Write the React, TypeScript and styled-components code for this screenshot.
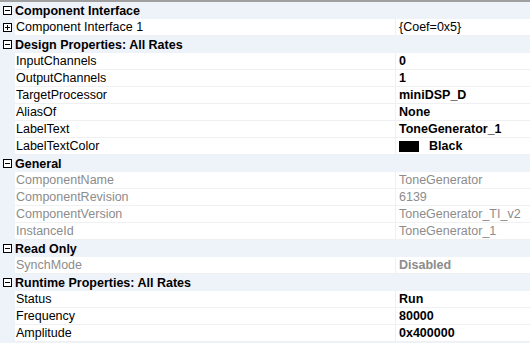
import React from "react";
import styled, { createGlobalStyle } from "styled-components";

type Prop = {
  name: string;
  value: string;
  readOnly?: boolean;
  plain?: boolean;
  swatch?: string;
  expandable?: boolean;
};

type Category = {
  title: string;
  props: Prop[];
};

const categories: Category[] = [
  {
    title: "Component Interface",
    props: [
      { name: "Component Interface 1", value: "{Coef=0x5}", expandable: true, plain: true },
    ],
  },
  {
    title: "Design Properties: All Rates",
    props: [
      { name: "InputChannels", value: "0" },
      { name: "OutputChannels", value: "1" },
      { name: "TargetProcessor", value: "miniDSP_D" },
      { name: "AliasOf", value: "None" },
      { name: "LabelText", value: "ToneGenerator_1" },
      { name: "LabelTextColor", value: "Black", swatch: "#000" },
    ],
  },
  {
    title: "General",
    props: [
      { name: "ComponentName", value: "ToneGenerator", readOnly: true, plain: true },
      { name: "ComponentRevision", value: "6139", readOnly: true, plain: true },
      { name: "ComponentVersion", value: "ToneGenerator_TI_v2", readOnly: true, plain: true },
      { name: "InstanceId", value: "ToneGenerator_1", readOnly: true, plain: true },
    ],
  },
  {
    title: "Read Only",
    props: [{ name: "SynchMode", value: "Disabled", readOnly: true }],
  },
  {
    title: "Runtime Properties: All Rates",
    props: [
      { name: "Status", value: "Run" },
      { name: "Frequency", value: "80000" },
      { name: "Amplitude", value: "0x400000" },
    ],
  },
];

const GlobalStyle = createGlobalStyle`
  body {
    margin: 0;
    background: #fff;
    font-family: "Liberation Sans", Arial, sans-serif;
    font-size: 12px;
  }
`;

const Grid = styled.div`
  width: 530px;
  height: 343px;
  overflow: hidden;
  border-top: 2px solid #a0a0a0;
  box-sizing: border-box;
  background: #eef2f9;
`;

const CategoryRow = styled.div`
  display: grid;
  grid-template-columns: 15px 1fr;
  align-items: center;
  height: 17px;
  background: #eef2f9;
  font-weight: bold;
  font-size: 12.5px;
  color: #000;
`;

const PropRow = styled.div`
  display: grid;
  grid-template-columns: 15px 381px 1fr;
  height: 17px;
`;

const Margin = styled.div`
  display: flex;
  align-items: center;
  justify-content: center;
  background: #eef2f9;
`;

const Cell = styled.div<{ $value?: boolean; $readOnly?: boolean; $plain?: boolean }>`
  display: flex;
  align-items: center;
  gap: 10px;
  background: #fff;
  border-bottom: 1px solid #eef0f2;
  border-right: ${(p) => (p.$value ? "none" : "1px solid #eef0f2")};
  padding-left: ${(p) => (p.$value ? "3px" : "1px")};
  font-size: 12.5px;
  font-weight: ${(p) => (p.$value && !p.$plain ? "bold" : "normal")};
  color: ${(p) => (p.$readOnly ? "#8c8c8c" : "#000")};
  white-space: nowrap;
  overflow: hidden;
`;

const Swatch = styled.span`
  display: inline-block;
  width: 20px;
  height: 11px;
  background: #000;
`;

const ToggleBox = styled.svg`
  display: block;
`;

const Toggle = ({ open }: { open: boolean }) => (
  <ToggleBox width="9" height="9" viewBox="0 0 9 9">
    <rect x="0.5" y="0.5" width="8" height="8" fill="#fff" stroke="#000" />
    <line x1="2" y1="4.5" x2="7" y2="4.5" stroke="#000" />
    {!open && <line x1="4.5" y1="2" x2="4.5" y2="7" stroke="#000" />}
  </ToggleBox>
);

export default function App() {
  return (
    <>
      <GlobalStyle />
      <Grid>
        {categories.map((c) => (
          <React.Fragment key={c.title}>
            <CategoryRow>
              <Margin>
                <Toggle open />
              </Margin>
              <span>{c.title}</span>
            </CategoryRow>
            {c.props.map((p) => (
              <PropRow key={p.name}>
                <Margin>{p.expandable && <Toggle open={false} />}</Margin>
                <Cell $readOnly={p.readOnly}>{p.name}</Cell>
                <Cell $value $readOnly={p.readOnly} $plain={p.plain}>
                  {p.swatch && <Swatch style={{ background: p.swatch }} />}
                  {p.value}
                </Cell>
              </PropRow>
            ))}
          </React.Fragment>
        ))}
      </Grid>
    </>
  );
}
